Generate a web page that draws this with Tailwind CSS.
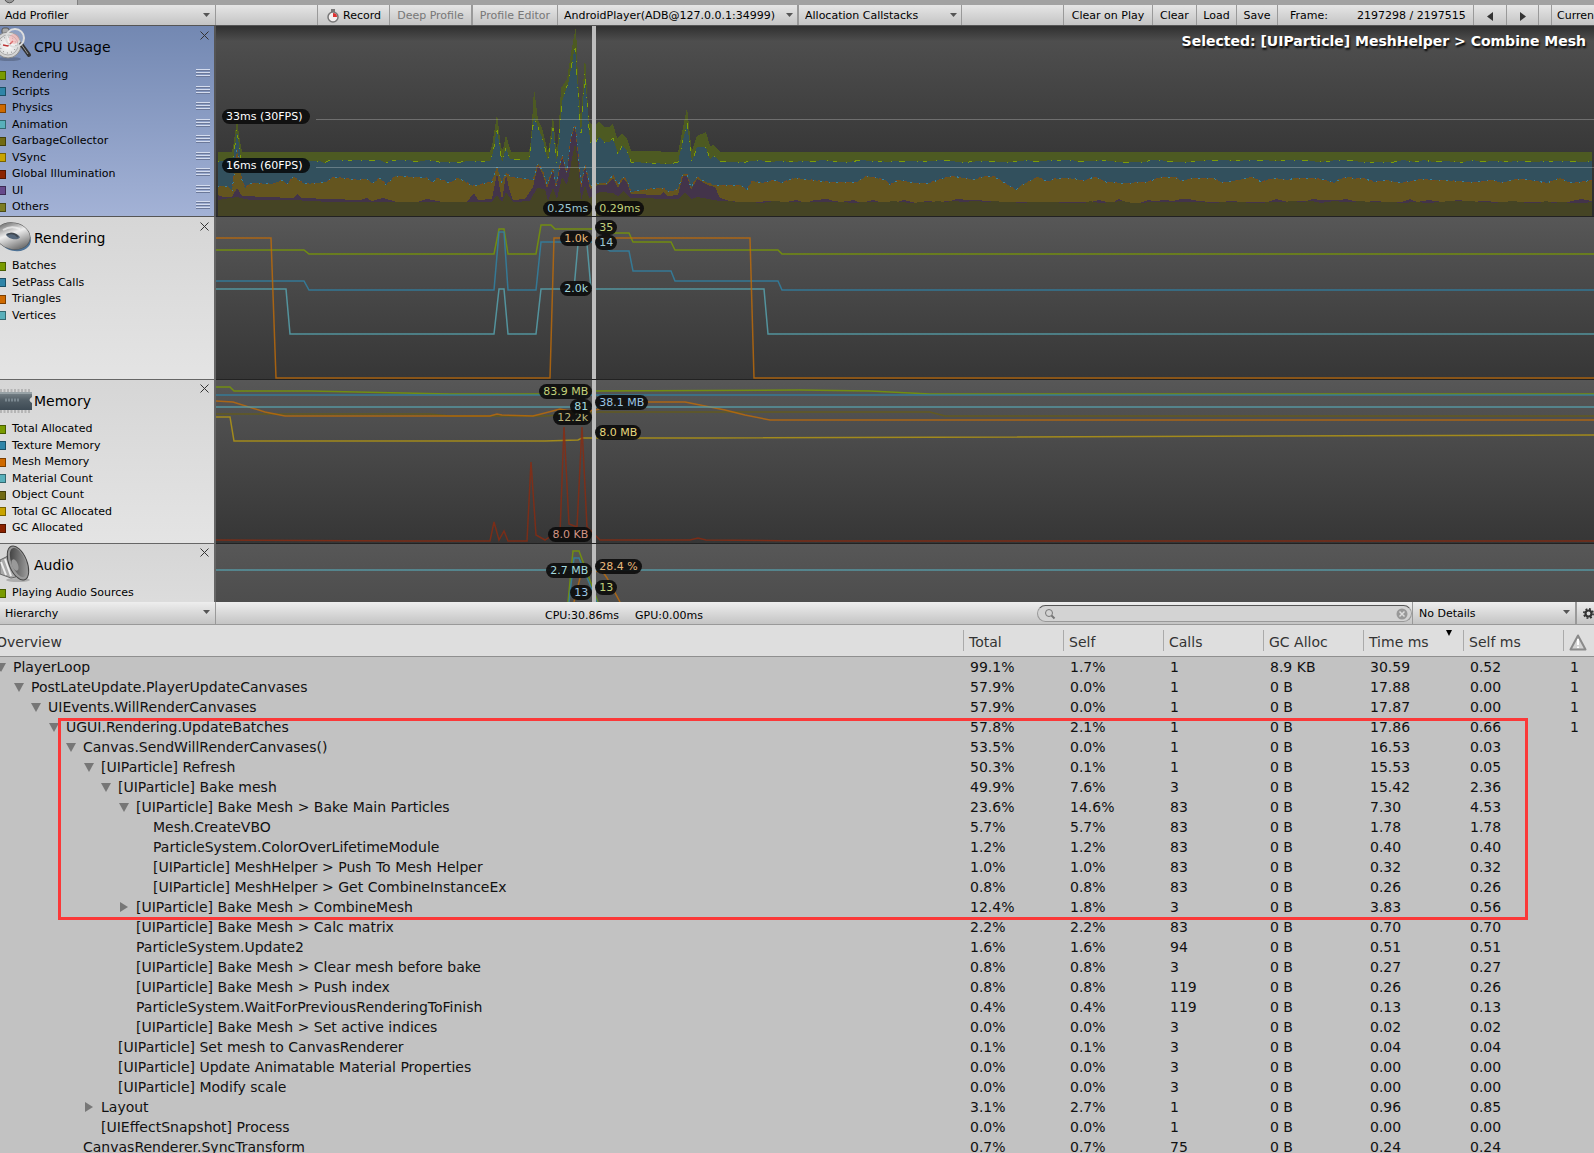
<!DOCTYPE html>
<html lang="en">
<head>
<meta charset="utf-8">
<title>Profiler</title>
<script src="https://cdn.jsdelivr.net/npm/@tailwindcss/browser@4"></script>
</head>
<body class="h-screen overflow-hidden flex flex-col bg-[#c2c2c2] font-['DejaVu_Sans',sans-serif] text-[11px] text-black">

<!-- window tab strip -->
<div class="h-[5px] shrink-0 bg-[#a2a2a2]"><div class="h-full w-[78px] bg-[#c8c8c8] border-r border-[#808080] pl-1">
  <svg class="block" width="12" height="4"><path d="M1 0a5 5 0 0 0 9 0" fill="#999" stroke="#555"/></svg></div></div>

<!-- toolbar -->
<header class="h-[21px] shrink-0 flex items-stretch bg-linear-to-b from-[#e6e6e6] to-[#c4c4c4] border-b border-[#555] whitespace-nowrap [&_button]:pt-[2px] [&_select]:pt-[2px]">
  <label class="relative w-[216px] border-r border-[#999] flex"><select aria-label="Add Profiler" class="appearance-none w-full pl-[5px] outline-none"><option>Add Profiler</option></select><svg class="absolute right-[5px] top-2" width="7" height="4"><path d="M0 0h7L3.500 4z" fill="#555"/></svg></label>
  <div class="w-[102px] border-r border-[#999]"></div>
  <button class="w-[72px] border-r border-[#999] flex items-center gap-1 pl-[9px]">
    <svg width="12" height="14" viewBox="0 0 12 14"><rect x="4" y="0" width="4" height="3" fill="#777"/><circle cx="6" cy="8" r="5" fill="#f4f0f0" stroke="#777" stroke-width="1.500"/><path d="M6 8V4a4 4 0 0 1 4 4z" fill="#d33"/></svg>Record</button>
  <button class="w-[82px] border-r border-[#999] text-[#777]">Deep Profile</button>
  <button class="w-[86px] border-r border-[#999] border-l text-[#777] flex justify-center items-center overflow-hidden">Profile Editor</button>
  <label class="relative w-[241px] border-r-2 border-[#999] flex"><select aria-label="Connected player" class="appearance-none w-full pl-[6px] outline-none"><option>AndroidPlayer(ADB@127.0.0.1:34999)</option></select><svg class="absolute right-[4px] top-2" width="7" height="4"><path d="M0 0h7L3.500 4z" fill="#555"/></svg></label>
  <label class="relative w-[163px] border-r border-[#999] flex"><select aria-label="Allocation Callstacks" class="appearance-none w-full pl-[6px] outline-none"><option>Allocation Callstacks</option></select><svg class="absolute right-[4px] top-2" width="7" height="4"><path d="M0 0h7L3.500 4z" fill="#555"/></svg></label>
  <div class="flex-1 border-r border-[#999]"></div>
  <button class="w-[89px] border-r border-[#999]">Clear on Play</button>
  <button class="w-[44px] border-r border-[#999]">Clear</button>
  <button class="w-[40px] border-r border-[#999]">Load</button>
  <button class="w-[41px] border-r border-[#999]">Save</button>
  <div class="w-[196px] border-r border-[#999] pl-[12px] pt-[3px] flex items-center"><span class="w-[67px]">Frame:</span><span class="w-[110px] overflow-hidden">2197298 / 2197515</span></div>
  <button aria-label="Previous frame" class="w-[33px] border-r border-[#999] flex items-center justify-center"><svg width="6" height="9"><path d="M6 0v9L0 4.500z" fill="#333"/></svg></button>
  <button aria-label="Next frame" class="w-[32px] border-r border-[#999] flex items-center justify-center"><svg width="6" height="9"><path d="M0 0v9l6-4.500z" fill="#333"/></svg></button>
  <div class="w-[13px] border-r border-[#999]"></div>
  <button class="w-[42px] pl-[5px] text-left overflow-hidden">Current</button>
</header>

<main id="charts" class="shrink-0">
  <section class="flex h-[191px]">
    <div class="w-[216px] border-r-2 border-b border-[#555] bg-linear-to-b from-[#7388b2] to-[#a3b2d6] flex flex-col">
      <div class="flex h-[41px] items-start">
        <svg class="shrink-0 w-[34px] h-[40px]" viewBox="0 0 34 40"><defs><radialGradient id="face"><stop offset="0" stop-color="#fff"/><stop offset="1" stop-color="#ddd"/></radialGradient></defs>
          <rect x="2" y="2" width="7" height="6" rx="2" fill="#aaa" stroke="#555"/><ellipse cx="9" cy="33" rx="12" ry="2" fill="#000" opacity=".2"/><circle cx="8" cy="19" r="13" fill="#d4d4d4" stroke="#888"/><circle cx="8" cy="19" r="10" fill="url(#face)" stroke="#aaa"/><circle cx="8" cy="19" r="8" fill="none" stroke="#777" stroke-dasharray="1 3.200"/><path d="M8 20l5-5M8 20L3 19" stroke="#b33" stroke-width="1.500"/><path d="M21 18l8 11" stroke="#333" stroke-width="4" stroke-linecap="round"/><path d="M21 18l7 10" stroke="#999" stroke-width="1"/><circle cx="14" cy="13" r="5" fill="#f77" fill-opacity=".4"/><circle cx="15" cy="12" r="9" fill="#fff" fill-opacity=".2" stroke="#ddd" stroke-width="2"/></svg>
        <h2 class="flex-1 text-[14px] leading-[42px]">CPU Usage</h2>
        <button aria-label="Close CPU Usage" class="mr-[5px] mt-[5px]"><svg width="9" height="9"><path d="M0.500 0.500l8 8M8.500 0.500l-8 8" stroke="#333"/></svg></button>
      </div>
      <ul class="h-[146px] flex flex-col" data-legend="Rendering:#799b00,Scripts:#2f85a8,Physics:#cf6a00,Animation:#58b0bb,GarbageCollector:#716a12,VSync:#c9a400,Global Illumination:#8b2300,UI:#66498c,Others:#7c7c22" data-grip="1"></ul>
    </div>
    <div class="relative flex-1 border-b border-[#222] bg-linear-to-b from-[#303030] via-[#4e4e4e] via-8% to-[#2c2c2c]">
      <svg id="cpu" class="block w-full h-full" viewBox="216 26 1378 190" preserveAspectRatio="none" shape-rendering="crispEdges"></svg>
      <div class="absolute right-2 top-[6px] text-[14px] font-bold text-white leading-[18px] [text-shadow:1px_2px_2px_#000]">Selected: [UIParticle] MeshHelper &gt; Combine Mesh</div>
      <div class="absolute left-[6px] top-[83px] h-[15px] leading-[15px] pl-1 pr-2 rounded-full bg-[#111] text-white">33ms (30FPS)</div>
      <div class="absolute left-[6px] top-[132px] h-[15px] leading-[15px] pl-1 pr-2 rounded-full bg-[#0c1215] text-white">16ms (60FPS)</div>
      <div class="absolute left-[27.3%] inset-y-0 w-1 bg-[#bdbdbd]" data-tags="L,175,0.25ms,#9cc6d4;R,175,0.29ms,#c2d07c"></div>
    </div>
  </section>

  <section class="flex h-[163px]">
    <div class="w-[216px] border-r-2 border-b border-[#666] bg-linear-to-b from-[#d6d6d6] to-[#e4e4e4] flex flex-col">
      <div class="flex h-[41px] items-start">
        <svg class="shrink-0 w-[34px] h-[40px]" viewBox="0 0 34 40"><defs><linearGradient id="ring" x1="0" y1="0" x2="1" y2="1"><stop offset="0" stop-color="#888"/><stop offset=".4" stop-color="#eee"/><stop offset="1" stop-color="#777"/></linearGradient></defs><ellipse cx="15" cy="22" rx="16" ry="12" fill="#4f7396" transform="rotate(12 15 22)"/><ellipse cx="13" cy="19" rx="12" ry="8" fill="none" stroke="#555" stroke-width="11" transform="rotate(12 13 19)"/><ellipse cx="13" cy="19" rx="12" ry="8" fill="#56687c" stroke="url(#ring)" stroke-width="10" transform="rotate(12 13 19)"/><path d="M3 13q8-5 17-1" fill="none" stroke="#f4f4f4" stroke-width="2" opacity=".7"/><path d="M7 18q6-4 11 2" fill="none" stroke="#333" stroke-width="1.500" opacity=".6"/></svg>
        <h2 class="flex-1 text-[14px] leading-[42px]">Rendering</h2>
        <button aria-label="Close Rendering" class="mr-[5px] mt-[5px]"><svg width="9" height="9"><path d="M0.500 0.500l8 8M8.500 0.500l-8 8" stroke="#333"/></svg></button>
      </div>
      <ul class="h-[65px] flex flex-col" data-legend="Batches:#799b00,SetPass Calls:#2f85a8,Triangles:#cf6a00,Vertices:#58b0bb"></ul>
    </div>
    <div class="relative flex-1 border-b border-[#222] bg-linear-to-b from-[#575757] to-[#363636]">
      <svg id="rendering" class="block w-full h-full" viewBox="216 217 1378 162" preserveAspectRatio="none"></svg>
      <div class="absolute left-[27.3%] inset-y-0 w-1 bg-[#bdbdbd]" data-tags="R,3,35,#c2d07c;R,18,14,#9cc6d4;L,14,1.0k,#e8b87c;L,64,2.0k,#a4dadf"></div>
    </div>
  </section>

  <section class="flex h-[164px]">
    <div class="w-[216px] border-r-2 border-b border-[#666] bg-linear-to-b from-[#d6d6d6] to-[#e4e4e4] flex flex-col">
      <div class="flex h-[41px] items-start">
        <svg class="shrink-0 w-[34px] h-[40px]" viewBox="0 0 34 40"><defs><linearGradient id="chip" x1="0" y1="0" x2="0" y2="1"><stop offset="0" stop-color="#7d878c"/><stop offset=".45" stop-color="#525e66"/><stop offset="1" stop-color="#3d4a54"/></linearGradient></defs><path d="M0 11h31M0 31h31" stroke="#b4b4b4" stroke-width="4" stroke-dasharray="2 1.500"/><path d="M0 12h32v5q-5 3 0 6v7H0z" fill="url(#chip)"/><path d="M0 13h32" stroke="#98a2a6" stroke-width="2"/><path d="M5 20h15" stroke="#7b8890" stroke-width="3" stroke-dasharray="2 1"/></svg>
        <h2 class="flex-1 text-[14px] leading-[42px]">Memory</h2>
        <button aria-label="Close Memory" class="mr-[5px] mt-[4px]"><svg width="9" height="9"><path d="M0.500 0.500l8 8M8.500 0.500l-8 8" stroke="#333"/></svg></button>
      </div>
      <ul class="h-[113px] flex flex-col" data-legend="Total Allocated:#799b00,Texture Memory:#2f85a8,Mesh Memory:#cf6a00,Material Count:#58b0bb,Object Count:#716a12,Total GC Allocated:#c9a400,GC Allocated:#8b2300"></ul>
    </div>
    <div class="relative flex-1 border-b border-[#222] bg-linear-to-b from-[#575757] to-[#363636]">
      <svg id="memory" class="block w-full h-full" viewBox="216 380 1378 163" preserveAspectRatio="none"></svg>
      <div class="absolute left-[27.3%] inset-y-0 w-1 bg-[#bdbdbd]" data-tags="L,4,83.9 MB,#c2d07c;L,30,12.2k,#bcb67c;L,19,81,#a4dadf;R,15,38.1 MB,#9cc6e4;R,45,8.0 MB,#e8d87c;L,147,8.0 KB,#d09484"></div>
    </div>
  </section>

  <section class="flex h-[58px] overflow-hidden">
    <div class="w-[216px] border-r-2 border-[#666] bg-linear-to-b from-[#d6d6d6] to-[#dcdcdc] flex flex-col">
      <div class="flex h-[41px] items-start">
        <svg class="shrink-0 w-[34px] h-[40px]" viewBox="0 0 34 40"><defs><linearGradient id="cone" x1="0" y1="0" x2="1" y2="1"><stop offset="0" stop-color="#333"/><stop offset="1" stop-color="#aaa"/></linearGradient></defs><ellipse cx="18" cy="36" rx="12" ry="2" fill="#000" opacity=".2"/><path d="M0 16l8-4 8 21-5 1-11-4z" fill="#aaa" stroke="#666"/><path d="M1 18l5 13M5 15l6 17" stroke="#eee" stroke-width="2"/><ellipse cx="18" cy="19" rx="9" ry="18" fill="#999" stroke="#444" transform="rotate(-22 18 19)"/><ellipse cx="18.500" cy="18.500" rx="7" ry="15.500" fill="url(#cone)" transform="rotate(-22 18.500 18.500)"/><ellipse cx="15" cy="21" rx="3" ry="6" fill="#999" transform="rotate(-22 15 21)"/></svg>
        <h2 class="flex-1 text-[14px] leading-[42px]">Audio</h2>
        <button aria-label="Close Audio" class="mr-[5px] mt-[4px]"><svg width="9" height="9"><path d="M0.500 0.500l8 8M8.500 0.500l-8 8" stroke="#333"/></svg></button>
      </div>
      <ul class="h-[16px] flex flex-col" data-legend="Playing Audio Sources:#799b00"></ul>
    </div>
    <div class="relative flex-1 bg-linear-to-b from-[#575757] to-[#4d4d4d]">
      <svg id="audio" class="block w-full h-full" viewBox="216 544 1378 58" preserveAspectRatio="none"></svg>
      <div class="absolute left-[27.3%] inset-y-0 w-1 bg-[#bdbdbd]" data-tags="L,19,2.7 MB,#a4dadf;L,41,13,#9cc6e4;R,15,28.4 %,#e8b87c;R,36,13,#c2d07c"></div>
    </div>
  </section>
</main>

<!-- details toolbar -->
<div class="h-[23px] shrink-0 flex items-stretch bg-linear-to-b from-[#eee] to-[#c4c4c4] border-b border-[#999] [&_select]:pt-[2px]">
  <label class="relative w-[216px] border-r border-[#999] flex"><select aria-label="View" class="appearance-none w-full pl-[5px] outline-none"><option>Hierarchy</option></select><svg class="absolute right-[5px] top-2" width="7" height="4"><path d="M0 0h7L3.500 4z" fill="#555"/></svg></label>
  <div class="flex-1 flex items-center pt-[7px] pl-[329px] gap-4"><span>CPU:30.86ms</span><span>GPU:0.00ms</span></div>
  <label class="w-[375px] mt-[3px] mb-[2px] flex items-center rounded-full border border-[#999] border-t-[#555] bg-[#d3d3d3] px-[6px]">
    <svg width="12" height="12"><circle cx="5" cy="5" r="3.500" fill="none" stroke="#777" stroke-width="1"/><path d="M7.500 7.500l3 3" stroke="#777" stroke-width="2"/></svg>
    <input type="text" aria-label="Search" class="flex-1 min-w-0 outline-none">
    <svg class="-mr-[3px]" width="12" height="12"><circle cx="6" cy="6" r="5.500" fill="#999"/><path d="M3.500 3.500l5 5M8.500 3.500l-5 5" stroke="#ddd" stroke-width="1.500"/></svg>
  </label>
  <label class="relative w-[165px] border-l border-r-2 border-[#999] flex"><select aria-label="Details" class="appearance-none w-full pl-[6px] outline-none"><option>No Details</option></select><svg class="absolute right-[5px] top-2" width="7" height="4"><path d="M0 0h7L3.500 4z" fill="#555"/></svg></label>
  <button aria-label="Settings" class="w-[17px] overflow-hidden pl-[6px]"><svg width="11" height="11" viewBox="0 0 13 13"><circle cx="6.500" cy="6.500" r="3.500" fill="none" stroke="#333" stroke-width="2.500"/><circle cx="6.500" cy="6.500" r="5.500" fill="none" stroke="#333" stroke-width="2" stroke-dasharray="2.200 2.120"/></svg></button>
</div>

<div class="relative flex-1 min-h-0 overflow-hidden">
  <table class="w-full table-fixed border-collapse text-[14px] text-[#111]">
    <thead>
      <tr class="h-[31px] bg-[#dedede] border-b border-[#8f8f8f] text-left text-[#333] whitespace-nowrap">
        <th class="font-normal p-0"><div class="-ml-1 h-[21px] leading-[25px]">Overview</div></th>
        <th class="font-normal w-[100px] p-0"><div class="border-l border-[#aaa] h-[21px] leading-[25px] pl-[5px]">Total</div></th>
        <th class="font-normal w-[100px] p-0"><div class="border-l border-[#aaa] h-[21px] leading-[25px] pl-[5px]">Self</div></th>
        <th class="font-normal w-[100px] p-0"><div class="border-l border-[#aaa] h-[21px] leading-[25px] pl-[5px]">Calls</div></th>
        <th class="font-normal w-[100px] p-0"><div class="border-l border-[#aaa] h-[21px] leading-[25px] pl-[5px]">GC Alloc</div></th>
        <th class="font-normal w-[100px] p-0"><div class="relative border-l border-[#aaa] h-[21px] leading-[25px] pl-[5px]">Time ms<svg class="absolute right-[11px] top-0" width="6" height="6"><path d="M0 0h6L3 6z" fill="#000"/></svg></div></th>
        <th class="font-normal w-[100px] p-0"><div class="border-l border-[#aaa] h-[21px] leading-[25px] pl-[5px]">Self ms</div></th>
        <th class="font-normal w-[31px] p-0"><div class="border-l border-[#aaa] h-[21px] pl-[5px] pt-[4px]"><svg width="18" height="17" viewBox="0 0 18 17"><path d="M9 1.500L16.500 15.500H1.500z" fill="#d4d4d4" stroke="#8a8a8a" stroke-width="2" stroke-linejoin="round"/><path d="M9 5v6M9 12.500v1.500" stroke="#fff" stroke-width="2"/></svg></div></th>
      </tr>
    </thead>
    <tbody id="rows"></tbody>
  </table>
  <div class="absolute left-[58px] right-[66px] top-[93px] h-[202px] border-3 border-[#fb3838] pointer-events-none"></div>
</div>

<script>
// depth | state (v open, > closed, - leaf) | name | columns
const data = `0|v|PlayerLoop|99.1%|1.7%|1|8.9 KB|30.59|0.52|1
1|v|PostLateUpdate.PlayerUpdateCanvases|57.9%|0.0%|1|0 B|17.88|0.00|1
2|v|UIEvents.WillRenderCanvases|57.9%|0.0%|1|0 B|17.87|0.00|1
3|v|UGUI.Rendering.UpdateBatches|57.8%|2.1%|1|0 B|17.86|0.66|1
4|v|Canvas.SendWillRenderCanvases()|53.5%|0.0%|1|0 B|16.53|0.03|
5|v|[UIParticle] Refresh|50.3%|0.1%|1|0 B|15.53|0.05|
6|v|[UIParticle] Bake mesh|49.9%|7.6%|3|0 B|15.42|2.36|
7|v|[UIParticle] Bake Mesh > Bake Main Particles|23.6%|14.6%|83|0 B|7.30|4.53|
8|-|Mesh.CreateVBO|5.7%|5.7%|83|0 B|1.78|1.78|
8|-|ParticleSystem.ColorOverLifetimeModule|1.2%|1.2%|83|0 B|0.40|0.40|
8|-|[UIParticle] MeshHelper > Push To Mesh Helper|1.0%|1.0%|83|0 B|0.32|0.32|
8|-|[UIParticle] MeshHelper > Get CombineInstanceEx|0.8%|0.8%|83|0 B|0.26|0.26|
7|>|[UIParticle] Bake Mesh > CombineMesh|12.4%|1.8%|3|0 B|3.83|0.56|
7|-|[UIParticle] Bake Mesh > Calc matrix|2.2%|2.2%|83|0 B|0.70|0.70|
7|-|ParticleSystem.Update2|1.6%|1.6%|94|0 B|0.51|0.51|
7|-|[UIParticle] Bake Mesh > Clear mesh before bake|0.8%|0.8%|3|0 B|0.27|0.27|
7|-|[UIParticle] Bake Mesh > Push index|0.8%|0.8%|119|0 B|0.26|0.26|
7|-|ParticleSystem.WaitForPreviousRenderingToFinish|0.4%|0.4%|119|0 B|0.13|0.13|
7|-|[UIParticle] Bake Mesh > Set active indices|0.0%|0.0%|3|0 B|0.02|0.02|
6|-|[UIParticle] Set mesh to CanvasRenderer|0.1%|0.1%|3|0 B|0.04|0.04|
6|-|[UIParticle] Update Animatable Material Properties|0.0%|0.0%|3|0 B|0.00|0.00|
6|-|[UIParticle] Modify scale|0.0%|0.0%|3|0 B|0.00|0.00|
5|>|Layout|3.1%|2.7%|1|0 B|0.96|0.85|
5|-|[UIEffectSnapshot] Process|0.0%|0.0%|1|0 B|0.00|0.00|
4|-|CanvasRenderer.SyncTransform|0.7%|0.7%|75|0 B|0.24|0.24|`.split('\n').map(l => l.split('|'));
const marks = {
  'v': '<path d="M0 1h10L5 10z" fill="#777"/>',
  '>': '<path d="M1 0v10l8-5z" fill="#777"/>',
  '-': ''
};
const esc = s => s.replace(/>/g, '&gt;');
document.getElementById('rows').innerHTML = data.map(([d, m, name, ...c]) =>
  `<tr class="h-[20px] whitespace-nowrap"><td class="p-0 overflow-hidden"><div class="flex items-center gap-[7px] leading-[20px]" style="margin-left:${Math.round(d * 17.5) - 4}px"><svg class="shrink-0" width="10" height="10">${marks[m]}</svg><span>${esc(name)}</span></div></td>` +
  c.map(v => `<td class="p-0 pl-[7px] leading-[20px]">${v}</td>`).join('') + '</tr>').join('');

// legends
document.querySelectorAll('[data-legend]').forEach(ul => {
  const grip = ul.dataset.grip ? '<svg class="ml-auto mr-[4px] mb-1" width="14" height="8" shape-rendering="crispEdges"><path d="M0 .5h14M0 3.500h14M0 6.500h14" stroke="#d4dcee"/><path d="M0 1.500h14M0 4.500h14M0 7.500h14" stroke="#6b7899"/></svg>' : '';
  ul.innerHTML = ul.dataset.legend.split(',').map(e => {
    const [n, c] = e.split(':');
    return `<li class="flex-1 flex items-center"><span class="w-[6px] h-[9px] border border-l-0 border-black/40 mr-[6px]" style="background:${c}"></span>${n}${grip}</li>`;
  }).join('');
});

// value tags beside the frame marker
document.querySelectorAll('[data-tags]').forEach(el => {
  el.innerHTML = el.dataset.tags.split(';').map(t => {
    const [side, y, text, c] = t.split(',');
    const cls = side === 'L' ? 'right-1' : 'left-[3px]';
    return `<span class="absolute ${cls} h-[15px] leading-[15px] px-1 rounded-full bg-[#0b0b0b]/90 whitespace-nowrap" style="top:${y}px;color:${c}">${text}</span>`;
  }).join('');
});

// line charts
const line = (pts, c) => `<polyline points="${pts}" fill="none" stroke="${c}" stroke-width="1.500" stroke-opacity=".8" vector-effect="non-scaling-stroke"/>`;
const draw = (id, list) => document.getElementById(id).innerHTML = list.map(([p, c]) => line(p, c)).join('');
draw('rendering', [
  ['216,250 304,250 309,254 494,254 499,229 504,229 508,254 536,254 541,225 551,225 555,229 596,229 610,233 629,233 633,242 671,242 675,250 778,250 782,254 1594,254', '#799b00'],
  ['216,281 304,281 309,290 494,290 499,232 504,232 508,290 536,290 541,242 596,242 610,251 629,251 633,271 671,271 675,281 778,281 782,290 1594,290', '#2f85a8'],
  ['216,289 286,289 290,334 494,334 499,289 504,289 508,334 536,334 541,289 574,289 578,244 587,244 591,289 764,289 768,334 1594,334', '#58a8b4'],
  ['216,238 271,238 276,378 550,378 554,238 750,238 754,378 1594,378', '#c06c08']
]);
draw('memory', [
  ['216,387 230,387 234,391 310,391 450,394 540,394 590,391 800,390 870,391 930,394 1594,394', '#799b00'],
  ['216,395 1594,395', '#2f85a8'],
  ['216,414 430,414 450,416 545,416 600,412 930,412 945,416 1594,416', '#665c14'],
  ['216,401 233,402 265,412 285,416 490,416 497,414 502,415 533,416 545,413 560,409 580,413 600,409 620,402 685,402 695,404 725,410 745,415 770,420 1594,420', '#c06c08'],
  ['216,407 1594,407', '#58a8b4'],
  ['216,417 230,417 234,441 545,441 578,440 582,438 700,438 1594,435', '#b89a10'],
  ['216,540 400,541 490,541 494,522 499,540 504,531 508,541 527,541 531,462 536,535 545,540 554,534 560,534 564,427 569,524 577,527 582,427 587,527 600,540 690,540 698,538 706,540 800,541 1594,541', '#8b2a10']
]);
draw('audio', [
  ['568,602 573,551 579,551 598,602', '#799b00'],
  ['569,602 574,558 579,558 597,602', '#2f85a8'],
  ['574,602 582,570 603,572 607,578 620,602', '#c06c08'],
  ['216,570 1594,570', '#58a8b4']
]);

// stacked CPU areas; steady stretches get a small repeatable ripple
let seed = 7;
const rnd = () => (seed = (seed * 16807) % 2147483647) / 2147483647;
const ripple = (from, to, base, amp) => {
  let s = '';
  for (let x = from; x < to; x += 6 + rnd() * 8) s += ` ${x.toFixed(0)},${(base + (rnd() - .5) * amp).toFixed(0)}`;
  return s;
};
const area = (pts, c) => `<polygon points="218,216 ${pts} 1592,216" fill="${c}"/>`;
const edge = (pts, c, dash) => `<polyline points="${pts}" fill="none" stroke="${c}" stroke-width="1" stroke-dasharray="${dash}"/>`;
const total = '218,152 232,152 234,141 237,120 240,141 242,152 490,152 492,146 497,114 501,147 503,150 506,135 511,152 529,152 531,140 534,88 538,120 542,128 548,152 550,140 553,115 556,148 558,143 561,88 567,79 571,53 576,26 578,80 581,120 585,55 587,92 589,122 594,126 599,122 604,127 609,127 613,124 617,138 622,134 627,138 631,151 643,151 678,152 680,143 687,107 691,145 692,151 697,136 706,132 710,146 714,145 720,152 1592,152';
const scripts = '218,161 233,161 237,130 241,161 320,161 324,163 330,160 380,160 386,163 391,160' + ripple(396, 480, 161, 3) + ' 490,161 493,153 497,128 502,163 506,147 510,159 529,160 534,117 543,140 548,161 553,128 557,163 562,102 569,80 575,46 579,107 581,135 585,73 590,142 595,143 599,137 604,142 609,142 613,138 618,154 622,146 627,150 631,162 670,164 678,162 687,123 692,162 697,147 706,147 710,159 714,156 719,161' + ripple(730, 1588, 161, 3) + ' 1592,161';
const vsync = '218,186 227,186 232,191 237,150 242,180 245,188 251,183 273,184 282,180 287,185 293,177 305,184 327,182 333,177 357,180 367,179 372,184 380,178 386,185 395,176 427,178 432,183 437,178 450,183 458,178 473,186 492,182 497,167 502,183 506,173 511,177 533,180 538,163 543,172 547,186 553,168 556,186 562,155 567,173 571,137 575,124 579,163 581,187 585,165 590,186 598,183 607,183 613,175 618,185 623,177 627,180 631,192 650,189 663,188 669,192 678,189 683,174 687,174 691,188 697,177 706,182 713,185 740,185 747,190 752,181 764,183 773,180 781,183 795,178 828,182 857,182 867,176 885,180 890,185 898,180 916,183 929,183 952,176 974,180 985,176 995,177 1003,182 1016,190 1022,185 1038,177' + ripple(1048, 1588, 180, 7) + ' 1592,180';
const ui = '218,195 223,197 232,197 237,188 242,196 293,198 297,194 302,198 330,199 360,200 367,198 372,201 383,198 397,202 417,202 427,199 443,202 467,202 474,193 478,200 492,199 497,173 502,200 506,175 510,192 513,200 525,199 533,187 538,165 543,175 547,189 553,170 556,189 562,157 567,175 571,139 575,127 579,166 581,190 585,167 590,189 598,185 607,185 613,178 618,188 623,179 627,183 631,194 660,195 663,192 668,196 678,195 683,176 687,176 691,190 697,179 710,186 715,187 720,198' + ripple(730, 1588, 201, 4) + ' 1592,201';
const others = '218,200 237,197 250,200 293,200 330,202 492,202 497,195 502,202 506,192 513,202 530,201 537,188 545,189 548,201 553,188 557,199 562,177 567,185 575,143 579,170 581,201 585,185 589,198 600,192 613,193 618,196 623,191 630,198 678,199 685,193 691,199 697,197 720,201' + ripple(730, 1588, 202, 2) + ' 1592,202';
document.getElementById('cpu').innerHTML =
  area(total, '#4d5a22') + area(scripts, '#32505d') + edge(scripts, '#7c9c08', '1 5 4 9 1 7 6 12') +
  area(vsync, '#64551f') + edge(vsync, '#7a4a1c', '3 4') + edge(vsync, '#3480a0', '1 6 2 7') + area(ui, '#43344a') + area(others, '#454424') +
  '<path d="M316 119.500H1594M316 167.500H1594" stroke="#fff" stroke-opacity=".25"/>';
</script>
</body>
</html>
